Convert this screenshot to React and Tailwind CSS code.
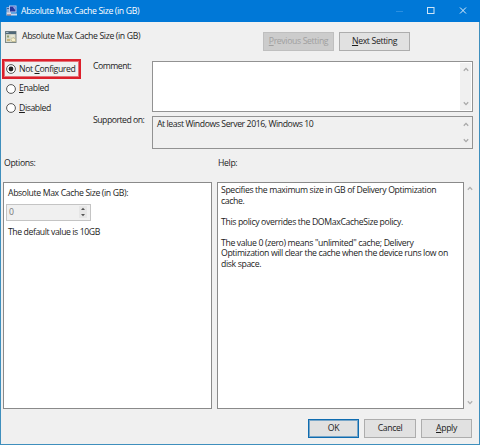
import React, { useState } from 'react';

function Chevron({ up, className }) {
  return (
    <svg viewBox="0 0 6 5" className={'w-[6px] h-[5px] shrink-0 ' + (className || '')}>
      <path d={up ? 'M0.8 3.8L3 1.4L5.2 3.8' : 'M0.8 1.2L3 3.6L5.2 1.2'} fill="none" stroke="currentColor" strokeWidth="1.3" />
    </svg>
  );
}

function ScrollStrip() {
  return (
    <div className="w-[11px] bg-[#f0f0f0] text-[#a9a9a9] flex flex-col items-center justify-between py-[4px]">
      <Chevron up />
      <Chevron />
    </div>
  );
}

function Button({ className, children, ...props }) {
  return (
    <button className={'h-[19px] leading-none border text-center whitespace-nowrap ' + className} {...props}>
      {children}
    </button>
  );
}

function Radio({ checked, onSelect, children }) {
  return (
    <button onClick={onSelect} className="flex items-center text-left whitespace-nowrap tracking-[-0.41px]">
      <svg viewBox="0 0 10 10" className="w-[10px] h-[10px] mr-[3px] shrink-0">
        <circle cx="5" cy="5" r="4.4" fill="#fff" stroke="#444" strokeWidth="0.9" />
        {checked && <circle cx="5" cy="5" r="2.4" fill="#222" />}
      </svg>
      <span>{children}</span>
    </button>
  );
}

function ComputerIcon() {
  return (
    <svg viewBox="0 0 12 12" className="w-[12px] h-[12px] shrink-0">
      <rect x="0.5" y="2" width="4" height="6" fill="#8fb0dc" />
      <rect x="1" y="3" width="2.5" height="1" fill="#4a5c90" />
      <rect x="3" y="0.5" width="7.5" height="7" fill="#b9c9ee" />
      <rect x="4" y="1.5" width="5.5" height="5" fill="#26379d" />
      <path d="M6.5 1.5h3v4z" fill="#8ba1e6" />
      <rect x="0.5" y="7.5" width="4.5" height="3" fill="#e0d9e0" />
      <rect x="5" y="8.5" width="6" height="2" fill="#ccd5ea" />
      <path d="M1 10h4" stroke="#6c5870" />
    </svg>
  );
}

function PolicyIcon() {
  return (
    <svg viewBox="0 0 12 12" className="w-[12px] h-[12px] shrink-0">
      <rect x="0.5" y="0.5" width="10.5" height="11" fill="#d9dac9" stroke="#7e8988" />
      <rect x="0.5" y="0.5" width="10.5" height="2.6" fill="#4f6878" />
      <rect x="1" y="1" width="2.5" height="1" fill="#a8bccb" />
      <rect x="2" y="4.5" width="2" height="2" fill="#8d9d75" />
      <rect x="5.5" y="4.5" width="4" height="1" fill="#f4f3e2" />
      <rect x="2" y="8" width="3" height="2" fill="#c9b57d" />
      <path d="M6 8.5l2-2 2.5 1.5v2.5H7z" fill="#f5f1cf" stroke="#b2a778" strokeWidth="0.6" />
    </svg>
  );
}

function TitleBar() {
  return (
    <div className="h-[22px] shrink-0 bg-[#0078d7] text-white flex items-center pl-[6px]">
      <ComputerIcon />
      <span className="ml-[3px] flex-1 whitespace-nowrap">Absolute Max Cache Size (in GB)</span>
      <svg viewBox="0 0 80 10" className="w-[80px] h-[10px] mr-[8px]" fill="none" stroke="currentColor">
        <path d="M4 5.5h7" stroke="#2b8fe0" />
        <rect x="35.5" y="1.5" width="6.5" height="6" stroke="#cfe5f7" />
        <path d="M68 1.5l6 6M74 1.5l-6 6" stroke="#e2effa" />
      </svg>
    </div>
  );
}

export default function App() {
  const [state, setState] = useState('none');
  return (
    <div className="w-[480px] h-[445px] flex flex-col bg-[#f0f0f0] text-[#1c1c1c] text-[8.7px] leading-[10.5px] tracking-[-0.36px] font-['Open_Sans',sans-serif] overflow-hidden">
      <TitleBar />
      <div className="flex-1 flex flex-col min-h-0 border-x border-b border-[#3f8fbd]">
        <div className="h-[37px] flex pl-[4px] pt-[9px]">
          <PolicyIcon />
          <span className="ml-[5px] w-[241px] whitespace-nowrap">Absolute Max Cache Size (in GB)</span>
          <Button disabled className="w-[71px] border-[#bfbfbf] bg-[#cccccc] text-[#a0a0a0] mt-px"><u>P</u>revious Setting</Button>
          <Button className="w-[71px] border-[#adadad] bg-[#e1e1e1] ml-[5px] mt-px"><u>N</u>ext Setting</Button>
        </div>

        <div className="h-[90px] flex">
          <div className="w-[92px] pl-px flex flex-col">
            <div className="w-[79px] h-[20px] border-2 border-[#dc1f2b] outline outline-[#dc1f2b]/60 -outline-offset-3 pl-[2px] flex items-center">
              <Radio checked={state === 'none'} onSelect={() => setState('none')}>Not <u>C</u>onfigured</Radio>
            </div>
            <div className="pl-[4px] flex flex-col">
              <div className="h-[19px] flex items-center">
                <Radio checked={state === 'on'} onSelect={() => setState('on')}><u>E</u>nabled</Radio>
              </div>
              <div className="h-[20px] flex items-center">
                <Radio checked={state === 'off'} onSelect={() => setState('off')}><u>D</u>isabled</Radio>
              </div>
            </div>
          </div>
          <div className="w-[59px] whitespace-nowrap tracking-[-0.5px]">
            <div className="h-[56px] pt-[2px]">Comment:</div>
            <div>Supported on:</div>
          </div>
          <div className="w-[321px] pt-[2px] flex flex-col gap-[4px]">
            <div className="h-[51px] border border-[#929292] bg-white p-px flex justify-end">
              <ScrollStrip />
            </div>
            <div className="h-[33px] border border-[#929292] p-px flex justify-between">
              <span className="pl-[3px] pt-px tracking-[-0.42px]">At least Windows Server 2016, Windows 10</span>
              <ScrollStrip />
            </div>
          </div>
        </div>

        <div className="h-[33px] flex pt-[9px]">
          <div className="w-[214px] pl-[3px]">Options:</div>
          <div className="pl-[3px]">Help:</div>
        </div>

        <div className="h-[227px] flex">
          <div className="ml-[2px] w-[209px] border border-[#8a8a8a] bg-white pl-[3px] pt-[5px]">
            <div className="pl-px">Absolute Max Cache Size (in GB):</div>
            <div className="mt-[5px] -ml-px w-[85px] h-[17px] border border-[#c4c4c4] bg-[#f0f0f0] flex justify-between items-center pl-[2px] pr-[3px] text-[#777]">
              <span>0</span>
              <div className="flex flex-col text-[#555] bg-[#e6e6e6] px-px">
                <svg viewBox="0 0 6 6" className="w-[6px] h-[6px]"><path d="M1 4L3 1.7L5 4z" fill="currentColor" /></svg>
                <svg viewBox="0 0 6 6" className="w-[6px] h-[6px]"><path d="M1 2L3 4.3L5 2z" fill="currentColor" /></svg>
              </div>
            </div>
            <div className="mt-[6px] pl-px tracking-[-0.42px]">The default value is 10GB</div>
          </div>
          <div className="ml-[5px] w-[247px] border border-[#8a8a8a] bg-white pl-[3px] pt-[2px] whitespace-nowrap">
            <p>Specifies the maximum size in GB of Delivery Optimization<br />cache.</p>
            <p className="mt-[10.5px]">This policy overrides the DOMaxCacheSize policy.</p>
            <p className="mt-[10.5px]">The value 0 (zero) means "unlimited" cache; Delivery<br />Optimization will clear the cache when the device runs low on<br />disk space.</p>
          </div>
          <div className="ml-[3px] w-[7px] flex flex-col justify-between py-[4px] text-[#b0b0b0]">
            <Chevron up />
            <Chevron />
          </div>
        </div>

        <div className="flex justify-end gap-[5px] pt-[10px] pr-[7px]">
          <Button className="w-[51px] border-[#0f6cb0] outline outline-[#0f6cb0]/50 -outline-offset-2 bg-[#e1e1e1]">OK</Button>
          <Button className="w-[52px] border-[#adadad] bg-[#e1e1e1]">Cancel</Button>
          <Button className="w-[51px] border-[#adadad] bg-[#e1e1e1]"><u>A</u>pply</Button>
        </div>
      </div>
    </div>
  );
}
